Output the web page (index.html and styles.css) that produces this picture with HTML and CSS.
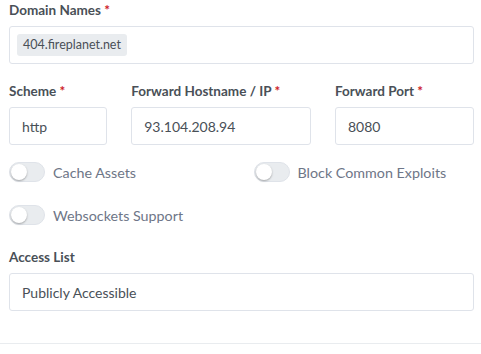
FILE: index.html
```html
<!DOCTYPE html>
<html lang="en">
  <head>
    <meta charset="UTF-8" />
    <meta name="viewport" content="width=device-width, initial-scale=1.0" />
    <title>Proxy Host</title>
    <link rel="stylesheet" href="styles.css">
  </head>

  <body>
    <div class="form-body">
      <div class="form-group">
        <label class="form-label">Domain Names <span class="form-required">*</span></label>
        <div class="form-control tags">
          <span class="tag">404.fireplanet.net</span>
        </div>
      </div>

      <div class="row">
        <div class="col col-3">
          <div class="form-group">
            <label class="form-label">Scheme <span class="form-required">*</span></label>
            <div class="form-control">http</div>
          </div>
        </div>
        <div class="col col-5">
          <div class="form-group">
            <label class="form-label">Forward Hostname / IP <span class="form-required">*</span></label>
            <div class="form-control">93.104.208.94</div>
          </div>
        </div>
        <div class="col col-4">
          <div class="form-group">
            <label class="form-label">Forward Port <span class="form-required">*</span></label>
            <div class="form-control">8080</div>
          </div>
        </div>
      </div>

      <div class="row">
        <div class="col col-6">
          <label class="custom-switch">
            <span class="switch-indicator"></span>
            <span class="switch-description">Cache Assets</span>
          </label>
        </div>
        <div class="col col-6">
          <label class="custom-switch">
            <span class="switch-indicator"></span>
            <span class="switch-description">Block Common Exploits</span>
          </label>
        </div>
        <div class="col col-6">
          <label class="custom-switch">
            <span class="switch-indicator"></span>
            <span class="switch-description">Websockets Support</span>
          </label>
        </div>
      </div>

      <div class="form-group access">
        <label class="form-label">Access List</label>
        <div class="form-control">Publicly Accessible</div>
      </div>
    </div>
    <div class="divider"></div>
  </body>
</html>
```

FILE: styles.css
```css
* {
  margin: 0;
  padding: 0;
  box-sizing: border-box;
}

body {
  font-family: "Lato", "Noto Sans", sans-serif;
  font-size: 14px;
  color: #495057;
  background-color: #fff;
}

.form-body {
  padding: 0 7px 0 9px;
}

.form-group {
  margin-bottom: 17px;
}

.form-label {
  display: block;
  font-size: 13.5px;
  font-weight: 700;
  line-height: 20px;
  margin-bottom: 6px;
  color: #495057;
}

.form-required {
  color: #cd201f;
}

.form-control {
  height: 38px;
  border: 1px solid #dfe3ea;
  border-radius: 3px;
  padding: 0 12px;
  display: flex;
  align-items: center;
  font-size: 14px;
  color: #495057;
}

.tags {
  padding: 0 7px;
}

.tag {
  background-color: #e9ecef;
  border-radius: 3px;
  padding: 2px 6px;
  font-size: 12.5px;
  line-height: 18px;
}

.row {
  display: flex;
  flex-wrap: wrap;
  margin: 0 -12px;
}

.col {
  padding: 0 12px;
}

.col-3 { width: 25%; }
.col-4 { width: 33.3333%; }
.col-5 { width: 41.6667%; }
.col-6 { width: 50%; }

.custom-switch {
  display: flex;
  align-items: center;
  height: 20px;
  margin: 0 0 23px;
}

.switch-indicator {
  width: 36px;
  height: 20px;
  border: 1px solid #dfe3e9;
  border-radius: 10px;
  background-color: #e9ecef;
  position: relative;
  flex-shrink: 0;
}

.switch-indicator::before {
  content: "";
  position: absolute;
  top: 1px;
  left: 1px;
  width: 16px;
  height: 16px;
  border-radius: 50%;
  background-color: #fff;
  box-shadow: 0 1px 2px rgba(0, 0, 0, 0.3);
}

.switch-description {
  margin-left: 8px;
  color: #6e7687;
  font-size: 14.3px;
}

.access {
  margin-top: -1px;
}

.divider {
  margin-top: 32px;
  border-top: 1px solid #e9ecef;
}
```
